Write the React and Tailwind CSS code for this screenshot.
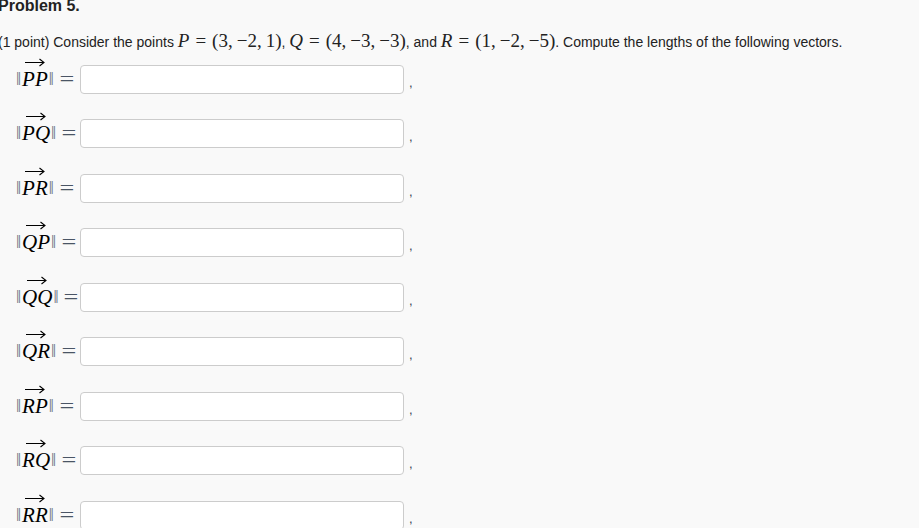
const rows = ['PP', 'PQ', 'PR', 'QP', 'QQ', 'QR', 'RP', 'RQ', 'RR']

const math = { fontFamily: '"Liberation Serif", "DejaVu Serif", serif' }

function Vec({ name }) {
    return (
        <span className="relative inline-block italic leading-none">
            <span className="absolute left-0 right-0 -top-[11px] flex justify-center">
                <svg width="22" height="9" viewBox="0 0 22 9" className="text-black">
                    <path d="M1 4.5h19M15.5 1l4.5 3.5-4.5 3.5" fill="none" stroke="currentColor" strokeWidth="1.1" />
                </svg>
            </span>
            {name}
        </span>
    )
}

function Point({ name, coords }) {
    return (
        <span className="text-[19px] whitespace-nowrap" style={math}>
            <i>{name}</i>
            <span className="mx-[6px]">=</span>
            (
            {coords.map((c, i) => (
                <span key={i}>
                    {i > 0 && <span className="mr-[4px]">,</span>}
                    {c}
                </span>
            ))}
            )
        </span>
    )
}

function Row({ name }) {
    return (
        <div className="flex items-center h-[54.5px]">
            <div className="flex items-center pl-[16px] w-[80px] text-[21px] text-black" style={math}>
                <span className="text-gray-500 text-[18px] mr-[1px]">‖</span>
                <Vec name={name} />
                <span className="text-gray-500 text-[18px] ml-[1px]">‖</span>
                <span className="ml-[7px] text-[21px] text-gray-600 scale-x-125">=</span>
            </div>
            <input type="text" className="w-[324px] h-[29px] bg-white border border-[#cccccc] rounded-[4px] outline-none" />
            <span className="ml-[5px] mt-[6px] text-[13px] text-gray-700">,</span>
        </div>
    )
}

export default function App() {
    return (
        <div className="min-h-screen bg-[#f9f9f9] text-[#222]" style={{ fontFamily: '"Liberation Sans", Arial, sans-serif' }}>
            <div className="-ml-[2px] -mt-[4px]">
                <h3 className="text-[16px] font-bold leading-[20px]">Problem 5.</h3>
                <p className="mt-[15px] text-[14px] leading-[20px] flex items-baseline flex-wrap">
                    <span>(1 point) Consider the points&nbsp;</span>
                    <Point name="P" coords={['3', '−2', '1']} />
                    <span>,&nbsp;</span>
                    <Point name="Q" coords={['4', '−3', '−3']} />
                    <span>, and&nbsp;</span>
                    <Point name="R" coords={['1', '−2', '−5']} />
                    <span>. Compute the lengths of the following vectors.</span>
                </p>
            </div>
            <div>
                {rows.map((r) => <Row key={r} name={r} />)}
            </div>
        </div>
    )
}
